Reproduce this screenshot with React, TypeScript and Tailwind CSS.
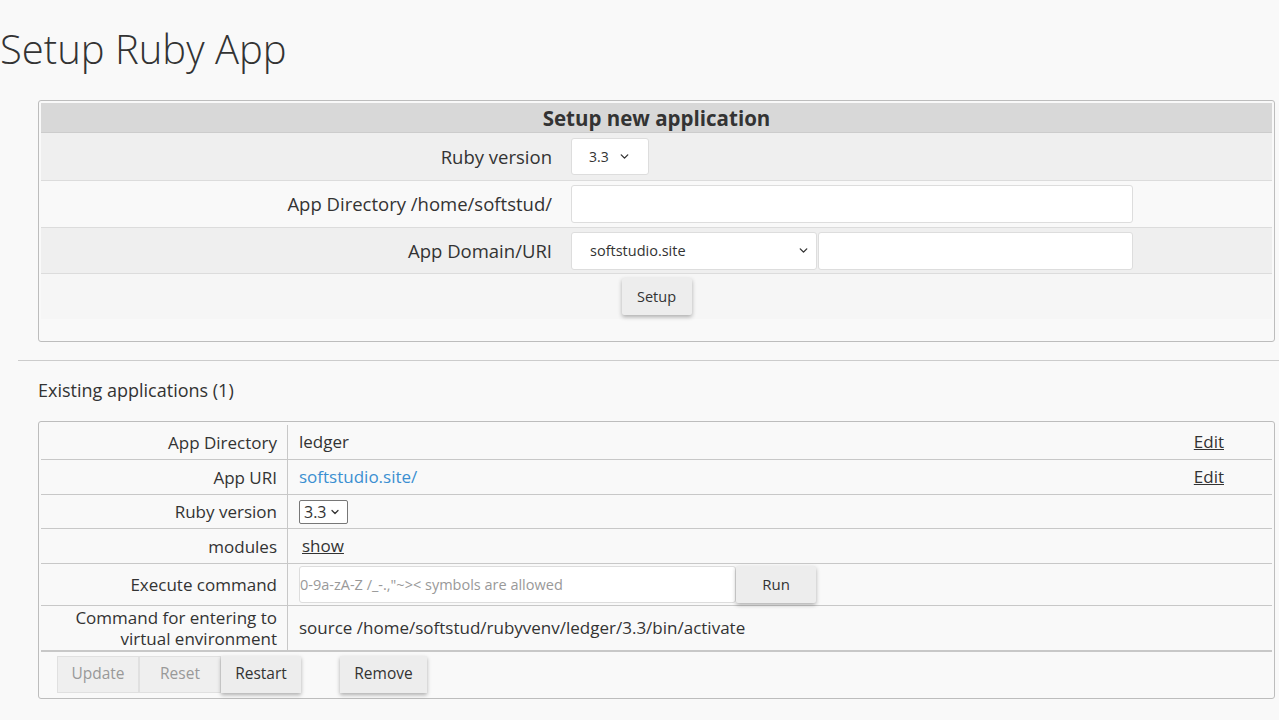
import { ChevronDown } from 'lucide-react'

const font = { fontFamily: '"Open Sans", "Liberation Sans", sans-serif' }

function Row({ label, bg, children, h }: { label: string; bg: string; children: React.ReactNode; h: string }) {
  return (
    <div className={`flex items-center border-b border-[#dcdcdc] ${bg} ${h}`}>
      <div className="w-[530px] pr-[19px] text-right text-[18.5px] text-[#333]">{label}</div>
      <div className="flex items-center">{children}</div>
    </div>
  )
}

function AppRow({ label, children, h, last }: { label: React.ReactNode; children: React.ReactNode; h: string; last?: boolean }) {
  return (
    <div className={`flex ${h} ${last ? '' : 'border-b border-[#c8c8c8]'}`}>
      <div className="w-[247px] border-r border-[#c8c8c8] pr-[10px] flex items-center justify-end text-right text-[17px] leading-[21px] text-[#333]">{label}</div>
      <div className="flex-1 flex items-center pl-[11px] text-[17px] text-[#333]">{children}</div>
    </div>
  )
}

export default function App() {
  return (
    <div style={font} className="min-h-[720px] bg-[#f9f9f9] pt-[22px] text-[#333]">
      <h1 className="text-[40px] font-light leading-[54px] text-[#333] pl-0">Setup Ruby App</h1>

      <div className="ml-[38px] mr-[4px] mt-[24px] rounded-[3px] border border-[#bdbdbd] p-[2px] pb-[22px]">
        <div className="h-[30px] bg-[#d8d8d8] text-center text-[20.5px] font-bold leading-[30px] text-[#333] border-b border-[#ccc]">Setup new application</div>
        <Row label="Ruby version" bg="bg-[#efefef]" h="h-[48px]">
          <div className="flex h-[37px] w-[78px] items-center justify-between rounded-[3px] border border-[#ddd] bg-white px-[17px] text-[14px]">
            3.3 <ChevronDown size={13} strokeWidth={2.5} />
          </div>
        </Row>
        <Row label="App Directory /home/softstud/" bg="bg-[#f9f9f9]" h="h-[47px]">
          <div className="h-[38px] w-[562px] rounded-[3px] border border-[#ddd] bg-white" />
        </Row>
        <Row label="App Domain/URI" bg="bg-[#efefef]" h="h-[46px]">
          <div className="flex h-[38px] w-[246px] items-center justify-between rounded-[3px] border border-[#ddd] bg-white pl-[18px] pr-[6px] text-[14.5px]">
            softstudio.site <ChevronDown size={13} strokeWidth={2.5} />
          </div>
          <div className="ml-[1px] h-[38px] w-[315px] rounded-[3px] border border-[#ddd] bg-white" />
        </Row>
        <div className="flex h-[45px] items-center justify-center bg-[#f6f6f6]">
          <button className="h-[37px] w-[70px] rounded-[2px] bg-[#ededed] text-[14.5px] text-[#333] shadow-[0_2px_4px_rgba(0,0,0,0.3)]">Setup</button>
        </div>
      </div>

      <div className="ml-[18px] mt-[18px] border-t border-[#ccc]" />
      <div className="ml-[38px] mt-[16px] text-[18px]">Existing applications (1)</div>

      <div className="ml-[38px] mr-[4px] mt-[17px] rounded-[3px] border border-[#bdbdbd] px-[2px] pt-[3px] pb-[2px] bg-[#f9f9f9]">
        <AppRow label="App Directory" h="h-[35px]">
          <span className="flex-1">ledger</span>
          <a className="mr-[48px] underline">Edit</a>
        </AppRow>
        <AppRow label="App URI" h="h-[35px]">
          <span className="flex-1 text-[#3b8fd1]">softstudio.site/</span>
          <a className="mr-[48px] underline">Edit</a>
        </AppRow>
        <AppRow label="Ruby version" h="h-[34px]">
          <div className="flex h-[24px] w-[49px] items-center gap-[2px] rounded-[2px] border border-[#777] bg-white pl-[4px] text-[16px]">
            3.3 <ChevronDown size={12} strokeWidth={2.5} />
          </div>
        </AppRow>
        <AppRow label="modules" h="h-[35px]">
          <a className="ml-[3px] underline">show</a>
        </AppRow>
        <AppRow label="Execute command" h="h-[42px]">
          <div className="flex h-[37px] w-[437px] items-center rounded-[3px] border border-[#ddd] bg-white text-[14.5px] text-[#999]">0-9a-zA-Z /_-.,"~&gt;&lt; symbols are allowed</div>
          <button className="h-[37px] w-[80px] rounded-[2px] bg-[#ededed] text-[15px] text-[#333] shadow-[0_2px_4px_rgba(0,0,0,0.3)]">Run</button>
        </AppRow>
        <AppRow label={<span>Command for entering to<br />virtual environment</span>} h="h-[45px]">
          source /home/softstud/rubyvenv/ledger/3.3/bin/activate
        </AppRow>
        <div className="flex h-[45px] items-center border-t border-[#c8c8c8] pl-[16px]">
          <button className="h-[37px] w-[82px] bg-[#efefef] border border-[#e0e0e0] text-[15.5px] text-[#999]">Update</button>
          <button className="h-[37px] w-[82px] bg-[#efefef] border border-[#e0e0e0] text-[15.5px] text-[#999]">Reset</button>
          <button className="h-[37px] w-[80px] bg-[#ededed] text-[15.5px] text-[#333] shadow-[0_2px_4px_rgba(0,0,0,0.3)]">Restart</button>
          <button className="ml-[39px] h-[37px] w-[87px] bg-[#ededed] text-[15.5px] text-[#333] shadow-[0_2px_4px_rgba(0,0,0,0.3)]">Remove</button>
        </div>
      </div>
    </div>
  )
}
